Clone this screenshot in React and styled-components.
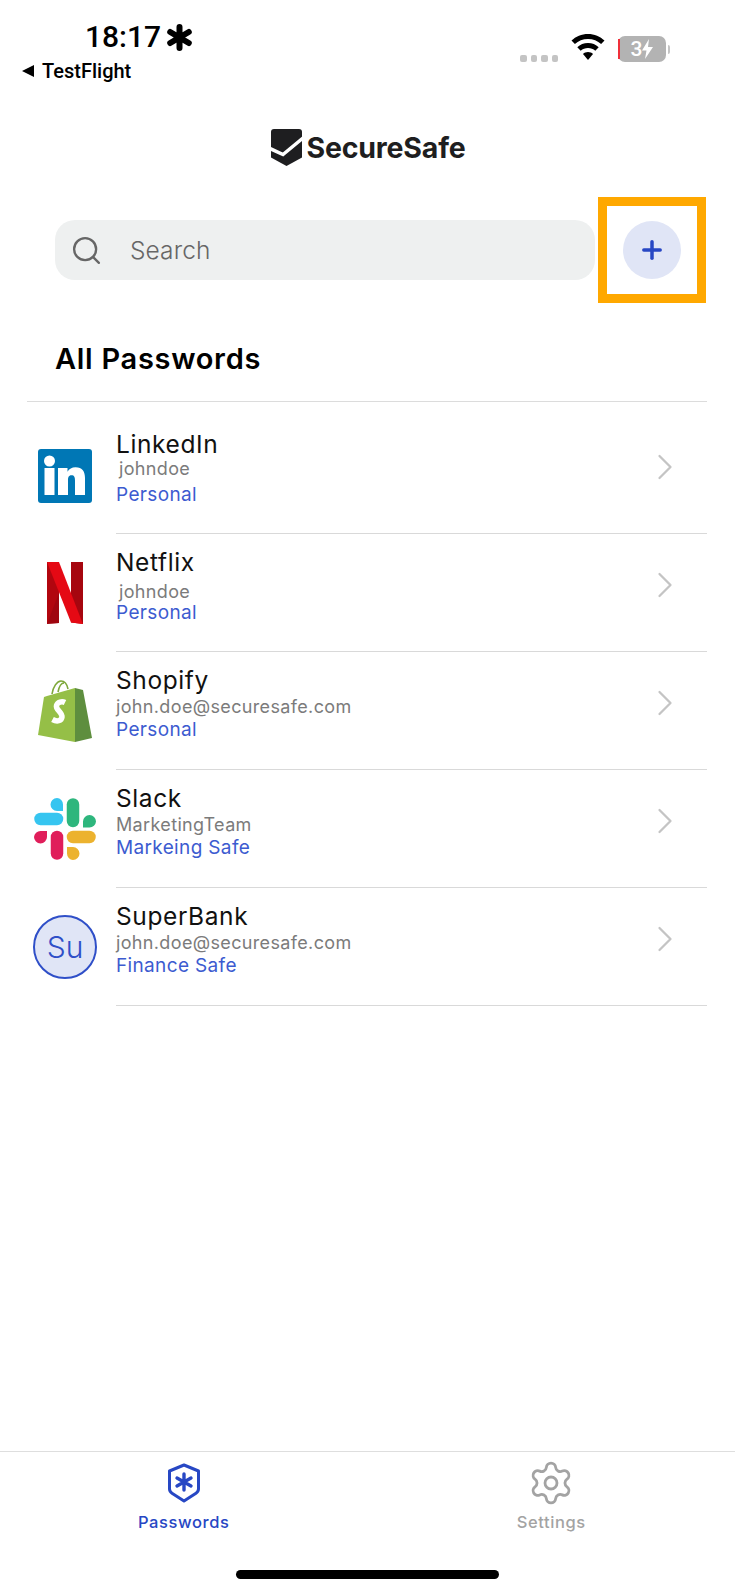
import styled, { createGlobalStyle } from "styled-components";
import { Settings, ChevronRight, Plus, Search } from "lucide-react";

const GlobalStyle = createGlobalStyle`
  html, body {
    margin: 0;
    padding: 0;
    background: #fff;
  }
  body {
    font-family: Inter, "Liberation Sans", sans-serif;
    color: #000;
  }
`;

const Page = styled.div`
  width: 735px;
  height: 1593px;
  display: flex;
  flex-direction: column;
  overflow: hidden;
  background: #fff;
`;

// 상태바
const StatusBar = styled.div`
  height: 124px;
  box-sizing: border-box;
  padding: 19px 69px 0 22px;
  display: flex;
  justify-content: space-between;
  flex-shrink: 0;
`;
const StatusLeft = styled.div`
  display: flex;
  flex-direction: column;
  gap: 4px;
`;
const TimeRow = styled.div`
  display: flex;
  align-items: center;
  gap: 6px;
  padding-left: 63px;
  height: 36px;
`;
const Time = styled.span`
  font-family: Roboto, sans-serif;
  font-size: 30px;
  font-weight: 500;
  line-height: 36px;
`;
const BackRow = styled.div`
  display: flex;
  align-items: center;
  gap: 8px;
  height: 24px;
`;
const BackText = styled.span`
  font-family: Roboto, sans-serif;
  font-size: 20px;
  font-weight: 500;
  line-height: 24px;
`;
const StatusRight = styled.div`
  display: flex;
  align-items: center;
  height: 56px;
`;
const Dots = styled.div`
  display: flex;
  gap: 4px;
  margin-right: 13px;
  margin-top: 22px;
`;
const Dot = styled.span`
  width: 6.5px;
  height: 7px;
  border-radius: 2px;
  background: #c4c4c4;
`;
const Battery = styled.div`
  position: relative;
  width: 48px;
  height: 26px;
  margin-left: 13px;
  margin-top: 4px;
  border-radius: 7px;
  background: #b3b3b3;
  color: #fff;
  display: flex;
  align-items: center;
  justify-content: center;
  font-family: Roboto, sans-serif;
  font-size: 21px;
  font-weight: 500;
  &::before {
    content: "";
    position: absolute;
    left: 0;
    top: 3px;
    bottom: 3px;
    width: 2px;
    background: #f0303a;
  }
  &::after {
    content: "";
    position: absolute;
    right: -4px;
    top: 9px;
    width: 2px;
    height: 9px;
    border-radius: 0 2px 2px 0;
    background: #c4c4c4;
  }
`;

// 로고
const LogoRow = styled.div`
  height: 73px;
  display: flex;
  justify-content: center;
  align-items: flex-start;
  gap: 5px;
  flex-shrink: 0;
  padding-left: 1px;
  box-sizing: border-box;
  padding-top: 5px;
`;
const LogoText = styled.span`
  font-size: 28.5px;
  font-weight: 700;
  color: #1e1e20;
  line-height: 37px;
  letter-spacing: -0.2px;
`;

// 검색
const SearchRow = styled.div`
  display: flex;
  align-items: center;
  padding-left: 55px;
  gap: 3px;
  flex-shrink: 0;
`;
const SearchBox = styled.div`
  width: 540px;
  height: 60px;
  border-radius: 20px;
  background: #eef0f0;
  display: flex;
  align-items: center;
  gap: 27px;
  padding-left: 15px;
  box-sizing: border-box;
  color: #666;
`;
const SearchLabel = styled.span`
  font-size: 24.5px;
  font-weight: 300;
  letter-spacing: 0.1px;
  color: #666;
`;
const Highlight = styled.div`
  width: 108px;
  height: 106px;
  box-sizing: border-box;
  border: 9px solid #ffa800;
  display: flex;
  align-items: center;
  justify-content: center;
`;
const AddButton = styled.div`
  width: 58px;
  height: 58px;
  border-radius: 50%;
  background: #e0e5f6;
  color: #2747c4;
  display: flex;
  align-items: center;
  justify-content: center;
`;

const HeadingWrap = styled.div`
  margin: 0 28px 0 27px;
  border-bottom: 1px solid #dcdcdc;
`;
const Heading = styled.h2`
  margin: 38px 0 0;
  padding: 0 0 24px 28px;
  font-size: 29px;
  font-weight: 600;
  line-height: 36px;
  letter-spacing: 0.7px;
`;

// 목록
const List = styled.div`
  flex: 1;
  padding: 14px 28px 0 27px;
`;
const Row = styled.div`
  display: flex;
  height: 118px;
`;
const IconSlot = styled.div`
  width: 76px;
  flex-shrink: 0;
  margin-right: 13px;
  display: flex;
  align-items: center;
  justify-content: center;
`;
const RowBody = styled.div`
  flex: 1;
  display: flex;
  justify-content: space-between;
  align-items: center;
  border-bottom: 1px solid #d9d9d9;
`;
const RowText = styled.div`
  align-self: flex-start;
  padding-top: 13px;
  display: flex;
  flex-direction: column;
`;
const Title = styled.div`
  font-size: 24.5px;
  font-weight: 400;
  letter-spacing: 0.6px;
  line-height: 30px;
  color: #111;
`;
const Sub = styled.div`
  font-size: 18px;
  font-weight: 400;
  letter-spacing: 0.35px;
  line-height: 22px;
  color: #7b7b7b;
  margin-top: ${(p) => p.$top}px;
  margin-left: ${(p) => p.$left || 0}px;
`;
const Tag = styled.div`
  font-size: 19px;
  font-weight: 400;
  letter-spacing: 0.35px;
  line-height: 24px;
  color: #3c5bd0;
  margin-top: ${(p) => p.$top}px;
`;
const Chevron = styled.div`
  color: #c4c4c4;
  display: flex;
  margin: 0 20px 15px 0;
`;
const Avatar = styled.div`
  width: 64px;
  height: 64px;
  box-sizing: border-box;
  border-radius: 50%;
  border: 2px solid #2f4fc8;
  background: #e0e5f6;
  color: #2f4fc8;
  font-size: 30px;
  font-weight: 300;
  display: flex;
  align-items: center;
  justify-content: center;
`;

// 탭바
const TabBar = styled.div`
  height: 84px;
  border-top: 1px solid #dedede;
  display: grid;
  grid-template-columns: 1fr 1fr;
  flex-shrink: 0;
`;
const Tab = styled.div`
  display: flex;
  flex-direction: column;
  align-items: center;
  padding-top: 10px;
  color: ${(p) => (p.$active ? "#2747c4" : "#a3a3a3")};
`;
const TabIcon = styled.div`
  height: 42px;
  display: flex;
  align-items: center;
`;
const TabLabel = styled.span`
  margin-top: 7px;
  font-size: 16.5px;
  font-weight: 500;
  letter-spacing: 0.6px;
  line-height: 22px;
`;
const HomeArea = styled.div`
  height: 57px;
  display: flex;
  justify-content: center;
  padding-top: 34px;
  box-sizing: border-box;
  flex-shrink: 0;
`;
const HomeIndicator = styled.div`
  width: 263px;
  height: 9px;
  border-radius: 5px;
  background: #000;
`;

const AsteriskIcon = () => (
  <svg width="25" height="27" viewBox="0 0 25 27">
    <g stroke="#000" strokeWidth="6" strokeLinecap="round">
      <path d="M12.5 3v21M3.2 8l18.6 11M21.8 8 3.2 19" />
    </g>
  </svg>
);

const BackTriangle = () => (
  <svg width="12" height="12" viewBox="0 0 12 12">
    <path d="M12 0v12L0 6z" fill="#000" />
  </svg>
);

const WifiIcon = () => (
  <svg width="34" height="26" viewBox="0 0 34 26">
    <path d="M17 0C10.6 0 4.8 2.500.5 6.600l3.400 3.500C7.300 6.900 11.900 5 17 5s9.700 1.900 13.100 5.100l3.400-3.500C29.200 2.500 23.400 0 17 0z" fill="#000" />
    <path d="M17 9c-4.100 0-7.900 1.600-10.700 4.200l3.400 3.500C11.600 14.900 14.200 14 17 14s5.400.9 7.300 2.700l3.400-3.500C24.900 10.600 21.100 9 17 9z" fill="#000" />
    <path d="M17 18c-2 0-3.700.7-5 1.900L17 26l5-6.100C20.700 18.700 19 18 17 18z" fill="#000" />
  </svg>
);

const BoltIcon = () => (
  <svg width="11" height="20" viewBox="0 0 11 20">
    <path d="M7 0 0 11.500h4.500L3 20l8-12H6z" fill="#fff" />
  </svg>
);

const LogoShield = () => (
  <svg width="31" height="37" viewBox="0 0 31 37">
    <path d="M3 0h25a3 3 0 0 1 3 3v25.500l-15.500 8.500L0 28.500V3a3 3 0 0 1 3-3z" fill="#1e1e20" />
    <path d="M-1 19.500l13 6L32 9" fill="none" stroke="#fff" strokeWidth="3.500" />
  </svg>
);

const LinkedInLogo = () => (
  <svg width="54" height="56" viewBox="0 -2 54 56">
    <rect width="54" height="54" rx="3" fill="#0077b5" />
    <circle cx="11.500" cy="12" r="5.500" fill="#fff" />
    <rect x="6.500" y="19" width="10" height="27" fill="#fff" />
    <path d="M20 19h9.500v3.700c1.500-2.700 4.500-4.400 8-4.400 7 0 9.500 4.500 9.500 10.700V46H37V31.500c0-3.300-.7-5.300-3.500-5.300-3.100 0-3.500 2.500-3.500 5.300V46H20z" fill="#fff" />
  </svg>
);

const NetflixLogo = () => (
  <svg width="36" height="62" viewBox="0 0 36 62">
    <path d="M0 0h12v61L0 62z" fill="#b1060f" />
    <path d="M24 0h12v62l-12-1.500z" fill="#b1060f" />
    <path d="M0 0h12l24 62-12-1.500z" fill="#e50914" />
    <path d="M12 31v30L0 62z" fill="#8f0510" opacity="0.55" />
    <path d="M24 31V0l12 0v62z" fill="#8f0510" opacity="0.3" />
  </svg>
);

const ShopifyLogo = () => (
  <svg width="54" height="62" viewBox="0 0 54 62">
    <path d="M0 55 6 17l3-1 28-8v54z" fill="#95bf47" />
    <path d="M37 8l8 2 9 48-17 4z" fill="#5e8e3e" />
    <path d="M14 14c1-7 5-13 9-13 4 0 6 3 7 8M20 12c1-5 3-9 6-9" fill="none" stroke="#7ea83a" strokeWidth="1.600" />
    <path d="M27 22.500c-3-1.500-7.500-.5-8.500 3-1.200 4.500 6 6.500 5.500 11.500-.4 4-5 5-9.500 2.500" fill="none" stroke="#fff" strokeWidth="5.500" />
  </svg>
);

const SlackLogo = () => (
  <svg width="62" height="62" viewBox="0 0 62 62">
    <g fill="none" strokeWidth="12.500" strokeLinecap="round">
      <path d="M6.500 21h16.500" stroke="#36c5f0" />
      <path d="M39 6.500V23" stroke="#2eb67d" />
      <path d="M55.500 39H39" stroke="#ecb22e" />
      <path d="M23 55.500V39" stroke="#e01e5a" />
    </g>
    <path d="M23 0a6.500 6.500 0 0 0 0 13h6V6.500A6.500 6.500 0 0 0 23 0z" fill="#36c5f0" />
    <path d="M62 23.500a6.500 6.500 0 0 0-13 0v6h6.500A6.500 6.500 0 0 0 62 23.500z" fill="#2eb67d" />
    <path d="M39 62a6.500 6.500 0 0 0 0-13h-6v6.500A6.500 6.500 0 0 0 39 62z" fill="#ecb22e" />
    <path d="M0 39a6.500 6.500 0 0 0 13 0v-6H6.500A6.500 6.500 0 0 0 0 39z" fill="#e01e5a" />
  </svg>
);

const ShieldIcon = () => (
  <svg width="34" height="40" viewBox="0 0 34 40">
    <path d="M17 2 31.500 8v18c0 2-1 3.200-2.500 4.200L17 38 5 30.200C3.500 29.200 2.500 28 2.500 26V8z" fill="none" stroke="currentColor" strokeWidth="3" strokeLinejoin="round" />
    <g stroke="currentColor" strokeWidth="3.400" strokeLinecap="round">
      <path d="M17 11v16M10 15l14 8M24 15l-14 8" />
    </g>
  </svg>
);

const passwords = [
  { name: "LinkedIn", user: "johndoe", safe: "Personal", subTop: -1, tagTop: 3, left: 3, logo: <LinkedInLogo /> },
  { name: "Netflix", user: "johndoe", safe: "Personal", subTop: 4, tagTop: -2, left: 3, logo: <NetflixLogo /> },
  { name: "Shopify", user: "john.doe@securesafe.com", safe: "Personal", subTop: 1, tagTop: 0, logo: <ShopifyLogo /> },
  { name: "Slack", user: "MarketingTeam", safe: "Markeing Safe", subTop: 1, tagTop: 0, logo: <SlackLogo /> },
  { name: "SuperBank", user: "john.doe@securesafe.com", safe: "Finance Safe", subTop: 1, tagTop: 0, logo: <Avatar>Su</Avatar> },
];

const App = () => {
  return (
    <Page>
      <GlobalStyle />
      <StatusBar>
        <StatusLeft>
          <TimeRow>
            <Time>18:17</Time>
            <AsteriskIcon />
          </TimeRow>
          <BackRow>
            <BackTriangle />
            <BackText>TestFlight</BackText>
          </BackRow>
        </StatusLeft>
        <StatusRight>
          <Dots>
            <Dot />
            <Dot />
            <Dot />
            <Dot />
          </Dots>
          <WifiIcon />
          <Battery>
            3<BoltIcon />
          </Battery>
        </StatusRight>
      </StatusBar>

      <LogoRow>
        <LogoShield />
        <LogoText>SecureSafe</LogoText>
      </LogoRow>

      <SearchRow>
        <SearchBox>
          <Search size={33} strokeWidth={1.7} />
          <SearchLabel>Search</SearchLabel>
        </SearchBox>
        <Highlight>
          <AddButton>
            <Plus size={28} strokeWidth={3} />
          </AddButton>
        </Highlight>
      </SearchRow>

      <HeadingWrap>
        <Heading>All Passwords</Heading>
      </HeadingWrap>

      <List>
        {passwords.map((item) => (
          <Row key={item.name}>
            <IconSlot>{item.logo}</IconSlot>
            <RowBody>
              <RowText>
                <Title>{item.name}</Title>
                <Sub $top={item.subTop} $left={item.left}>{item.user}</Sub>
                <Tag $top={item.tagTop}>{item.safe}</Tag>
              </RowText>
              <Chevron>
                <ChevronRight size={44} strokeWidth={1.25} />
              </Chevron>
            </RowBody>
          </Row>
        ))}
      </List>

      <TabBar>
        <Tab $active>
          <TabIcon>
            <ShieldIcon />
          </TabIcon>
          <TabLabel>Passwords</TabLabel>
        </Tab>
        <Tab>
          <TabIcon>
            <Settings size={48} strokeWidth={1.4} />
          </TabIcon>
          <TabLabel>Settings</TabLabel>
        </Tab>
      </TabBar>
      <HomeArea>
        <HomeIndicator />
      </HomeArea>
    </Page>
  );
};

export default App;
